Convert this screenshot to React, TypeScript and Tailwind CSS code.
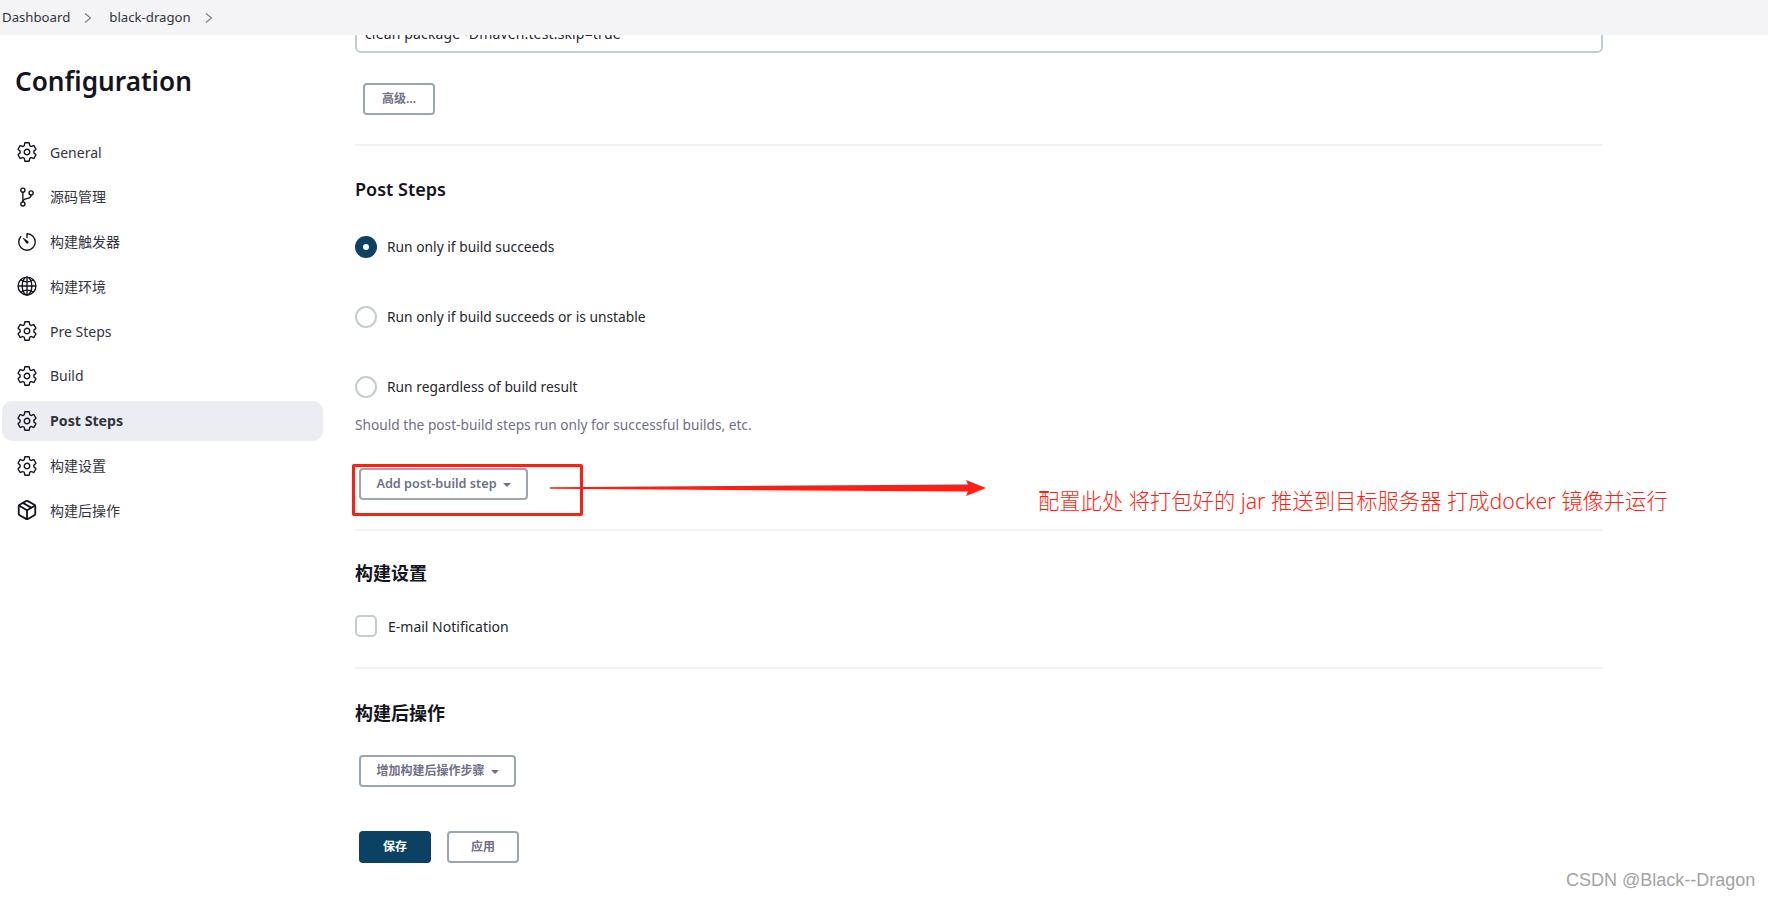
import { ReactNode } from "react";
import { IoSettingsOutline, IoGitBranchOutline, IoTimerOutline, IoGlobeOutline } from "react-icons/io5";
import { LuPackage } from "react-icons/lu";

const navItems: { label: string; icon: ReactNode; active?: boolean }[] = [
  { label: "General", icon: <IoSettingsOutline /> },
  { label: "源码管理", icon: <IoGitBranchOutline /> },
  { label: "构建触发器", icon: <IoTimerOutline /> },
  { label: "构建环境", icon: <IoGlobeOutline /> },
  { label: "Pre Steps", icon: <IoSettingsOutline /> },
  { label: "Build", icon: <IoSettingsOutline /> },
  { label: "Post Steps", icon: <IoSettingsOutline />, active: true },
  { label: "构建设置", icon: <IoSettingsOutline /> },
  { label: "构建后操作", icon: <LuPackage /> },
];

const Chevron = () => (
  <svg width="10" height="12" viewBox="0 0 10 12" className="text-[#77778a]">
    <path d="M2 1.5L7.5 6L2 10.5" fill="none" stroke="currentColor" strokeWidth="1.1" />
  </svg>
);

const Radio = ({ label, checked }: { label: string; checked?: boolean }) => (
  <div className="flex h-[22px] items-center gap-[10px]">
    {checked ? (
      <span className="flex h-[22px] w-[22px] items-center justify-center rounded-full bg-[#0b4263]">
        <span className="h-[6px] w-[6px] rounded-full bg-white" />
      </span>
    ) : (
      <span className="h-[22px] w-[22px] rounded-full border-2 border-[#c3ccd1]" />
    )}
    <span className="text-[13.8px] text-[#26262e]">{label}</span>
  </div>
);

const OutlineButton = ({ children, className }: { children: ReactNode; className: string }) => (
  <button className={`flex items-center justify-center gap-[6px] rounded-[4px] border-2 border-[#9aa7b2] bg-white font-semibold text-[#6f6f88] ${className}`}>
    {children}
  </button>
);

const Caret = () => <span className="mt-[1px] h-0 w-0 border-x-[4px] border-t-[4px] border-x-transparent border-t-[#6f6f88]" />;

export default function App() {
  return (
    <div
      className="relative flex h-[899px] w-[1768px] flex-col overflow-hidden bg-white"
      style={{ fontFamily: '"Noto Sans", "Noto Sans CJK SC", sans-serif' }}
    >
      <header className="relative z-10 flex h-[35px] shrink-0 items-center bg-[#f4f4f7] pl-[2px] text-[13.2px] text-[#33333d]">
        <span>Dashboard</span>
        <span className="ml-[13px] mr-[16px]"><Chevron /></span>
        <span>black-dragon</span>
        <span className="ml-[13px]"><Chevron /></span>
      </header>

      <div className="flex min-h-0 flex-1">
        <aside className="w-[323px] shrink-0 pl-[2px]">
          <h1 className="mb-[31px] mt-[26px] pl-[13px] text-[26.2px] font-semibold leading-[40px] text-[#14141f]">Configuration</h1>
          <nav className="flex flex-col gap-[4.8px]">
            {navItems.map((item) => (
              <div
                key={item.label}
                className={`flex h-[40px] items-center gap-[12px] rounded-[10px] pl-[14px] text-[14px] text-[#33333d] ${item.active ? "bg-[#ebedf2] font-bold text-[#14141f]" : ""}`}
              >
                <span className="text-[22px] text-[#14141f]">{item.icon}</span>
                <span className={item.active ? "text-[14.2px]" : ""}>{item.label}</span>
              </div>
            ))}
          </nav>
        </aside>

        <main className="ml-[32px] w-[1248px] shrink-0">
          <div className="-mt-[18px] flex h-[36px] items-center rounded-[6px] border-2 border-[#c3ccd1] px-[8px] pb-[4px] text-[14px] tracking-[0.15px] text-[#26262e]">
            clean package -Dmaven.test.skip=true
          </div>
          <OutlineButton className="ml-[8px] mt-[30px] h-[32px] w-[72px] text-[12px]">高级...</OutlineButton>
          <div className="mt-[29px] h-[2px] bg-[#f2f2f6]" />

          <h2 className="mt-[30px] text-[18px] font-semibold leading-[26px] text-[#14141f]">Post Steps</h2>
          <div className="mt-[34px] flex flex-col gap-[48px]">
            <Radio label="Run only if build succeeds" checked />
            <Radio label="Run only if build succeeds or is unstable" />
            <Radio label="Run regardless of build result" />
          </div>
          <p className="mt-[17px] text-[13.7px] leading-[20px] text-[#6f6f88]">Should the post-build steps run only for successful builds, etc.</p>
          <OutlineButton className="ml-[4px] mt-[33px] h-[32px] w-[169px] text-[12.7px]">
            Add post-build step
            <Caret />
          </OutlineButton>
          <div className="mt-[29px] h-[2px] bg-[#f2f2f6]" />

          <h2 className="mt-[29px] text-[18px] font-semibold leading-[26px] text-[#14141f]">构建设置</h2>
          <div className="mt-[29px] flex h-[22px] items-center gap-[11px]">
            <span className="h-[22px] w-[22px] rounded-[5px] border-2 border-[#c3ccd1]" />
            <span className="text-[14px] text-[#26262e]">E-mail Notification</span>
          </div>
          <div className="mt-[30px] h-[2px] bg-[#f2f2f6]" />

          <h2 className="mt-[31px] text-[18px] font-semibold leading-[26px] text-[#14141f]">构建后操作</h2>
          <OutlineButton className="ml-[4px] mt-[29px] h-[32px] w-[157px] text-[12px]">
            增加构建后操作步骤
            <Caret />
          </OutlineButton>
          <div className="ml-[4px] mt-[44px] flex gap-[16px]">
            <button className="h-[32px] w-[72px] rounded-[4px] bg-[#0b4263] text-[12px] font-bold text-white">保存</button>
            <OutlineButton className="h-[32px] w-[72px] text-[12px]">应用</OutlineButton>
          </div>
        </main>
      </div>

      {/* annotation drawn over the screenshot */}
      <div className="absolute left-[352px] top-[464px] h-[52px] w-[231px] rounded-[2px] border-[3px] border-[#ff1f12]" />
      <svg className="absolute left-[550px] top-[478px]" width="438" height="20" viewBox="0 0 438 20">
        <polygon points="0,9.2 418,6.5 416,2 436,10 416,18 418,13.5 0,10.8" fill="#ff1f12" />
      </svg>
      <div className="absolute left-[1038px] top-[486px] text-[21.3px] leading-[30px] text-[#ff1f12]" style={{ fontWeight: 300 }}>
        配置此处 将打包好的 jar 推送到目标服务器 打成docker 镜像并运行
      </div>
      <div className="absolute left-[1566px] top-[869px] text-[18px] leading-[22px] text-[#a3a3a3]" style={{ fontFamily: '"Liberation Sans", sans-serif' }}>
        CSDN @Black--Dragon
      </div>
    </div>
  );
}
